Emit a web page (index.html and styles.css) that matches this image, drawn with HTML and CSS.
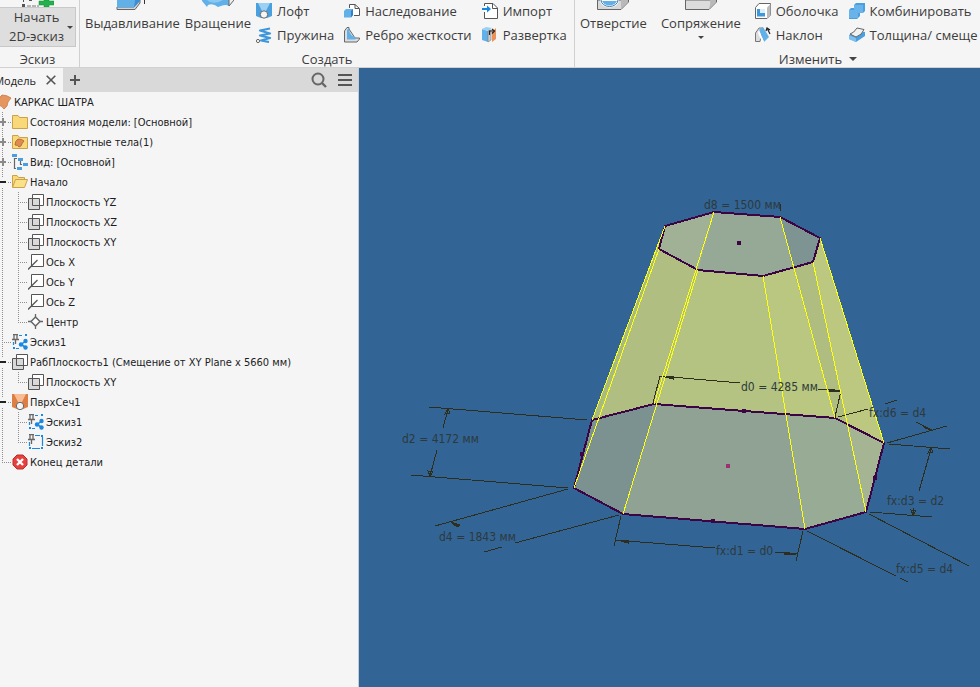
FILE: index.html
```html
<!DOCTYPE html>
<html lang="ru">
<head>
<meta charset="utf-8">
<title>КАРКАС ШАТРА</title>
<link rel="stylesheet" href="styles.css">
</head>
<body>
<svg class="defs" aria-hidden="true">
  <symbol id="g-v" viewBox="0 0 16 20"><path class="dots" d="M6.5 0V20"/></symbol>
  <symbol id="g-t" viewBox="0 0 16 20"><path class="dots" d="M6.5 0V20M8 10.500H16"/></symbol>
  <symbol id="g-l" viewBox="0 0 16 20"><path class="dots" d="M6.5 0V10M6 10.500H16"/></symbol>
  <symbol id="g-plus" viewBox="0 0 16 20"><path class="dots" d="M6.500 0V5M6.500 16V20M12 10.500H16"/><path d="M2 10H10M7 6V14" stroke="#8a8a8a" stroke-width="2"/></symbol>
  <symbol id="g-minus" viewBox="0 0 16 20"><path class="dots" d="M6.500 0V5M6.500 16V20M12 10.500H16"/><path d="M2 10H10" stroke="#222" stroke-width="2"/></symbol>
  <symbol id="i-plane" viewBox="0 0 16 16"><path d="M4.500 .5H15.500V11.500H4.500Z" fill="#fff" stroke="#555"/><path d="M.5 4.500H11.500V15.500H.5Z" fill="#d5d5d5" fill-opacity=".9" stroke="#555"/><path d="M11.500 11.500H4.500V4.500" fill="none" stroke="#555"/></symbol>
  <symbol id="i-axis" viewBox="0 0 16 16"><path d="M3.500 .5H15.500V12.500H3.500Z" fill="#fff" stroke="#555"/><path d="M0 15.500L9.500 6" stroke="#555" stroke-width="1.300"/></symbol>
  <symbol id="i-center" viewBox="0 0 16 16"><path d="M7.500 3L12 7.500L7.500 12L3 7.500Z" fill="#fff" stroke="#666" stroke-width="1.500"/><path d="M7.500 0V3M7.500 12V15M0 7.500H3M12 7.500H15" stroke="#666" stroke-width="1.300"/></symbol>
  <symbol id="i-sketch" viewBox="0 0 16 16"><path d="M7 1.500H12M14.500 3V12M4 14.500H12M1.500 8V12" stroke="#1a88e0" stroke-width="1.200" fill="none"/><path d="M13 1h2v2h-2zM1 13h2v2H1zM13 13h2v2h-2z" fill="#1a88e0"/><path d="M1 .5H6M2 1V5M5 1V5M0 5.500H7M3.500 6V10" stroke="#666" stroke-width="1.300" fill="none"/></symbol>
  <symbol id="i-shared" viewBox="0 0 16 16"><path d="M7 1.500H11M1.500 8V11M4 14.500H8" stroke="#1a88e0" stroke-width="1.200" fill="none" stroke-dasharray="3 1"/><path d="M13 0h2v2h-2zM1 13h2v2H1z" fill="#1a88e0"/><path d="M14 7L9 10.500L14 13.500" stroke="#1a88e0" stroke-width="1.500" fill="none"/><circle cx="13.500" cy="7" r="2.200" fill="#1a88e0"/><circle cx="9" cy="10.500" r="2.200" fill="#1a88e0"/><circle cx="13.500" cy="13.500" r="2.200" fill="#1a88e0"/><path d="M1 .5H6M2 1V5M5 1V5M0 5.500H7M3.500 6V10" stroke="#666" stroke-width="1.300" fill="none"/></symbol>
  <symbol id="i-surface" viewBox="0 0 16 16"><path d="M6 1Q11 1 15 4Q11 8 11 12L8 15Q6 11 1 11Q1 5 6 1Z" fill="#e59560" stroke="#c9763c" stroke-width=".8"/></symbol>
  <symbol id="i-folder" viewBox="0 0 16 16"><path d="M.5 1.500H6L7.500 3.500H15.500V14.500H.5Z" fill="#f8d878" stroke="#c9a24a"/></symbol>
</svg>

<div class="app">
  <header class="ribbon">
    <section class="group group-sketch">
      <div class="tools">
        <button class="big start">
          <svg width="32" height="7" viewBox="0 0 32 7"><path d="M1.500 0V3" stroke="#555" stroke-dasharray="2 1"/><path d="M0 4h3v3H0zM7 0h3v1H7z" fill="#555"/><path d="M5 6H17" stroke="#777" stroke-dasharray="4 1"/><path d="M22 0h5v1h5v4h-5v2h-5V5h-5V1h5z" fill="#22b14c" stroke="#16903a" stroke-width=".5"/></svg>
          <span class="start-label"><span>Начать<br>2D-эскиз</span><i class="caret"></i></span>
        </button>
      </div>
      <h2>Эскиз</h2>
    </section>

    <section class="group group-create">
      <div class="tools">
        <button class="big">
          <svg width="32" height="10" viewBox="0 0 32 10"><path d="M20 0H24V3L19 9.500H1V7H18Z" fill="#d4d4d4" stroke="#666"/><path d="M1 0H24V1L18 7.500H1Z" fill="#62b0e8"/><path d="M19 0H24V1L18 7.500Z" fill="#3d8fd0"/><path d="M28.500 0V4" stroke="#333"/></svg>
          <span>Выдавливание</span>
        </button>
        <button class="big">
          <svg width="32" height="10" viewBox="0 0 32 10"><path d="M0 0H27V6Q24 4 19 6L16 7Q11 3 6 5L5 7L0 1Z" fill="#62b0e8"/><path d="M5 0H21Q15 4 8 2Z" fill="#8cc8f2"/><path d="M27 0V6L32 0" fill="#eee" stroke="#666"/></svg>
          <span>Вращение</span>
        </button>
        <div class="stack">
          <button class="small"><svg viewBox="0 0 16 16"><path d="M0 0H16V13L11 15H5L0 13Z" fill="#4a9fdf"/><path d="M2 0H14L10 8H6Z" fill="#9bd0f5"/><circle cx="8" cy="11.500" r="3.700" fill="#f5f5f5" stroke="#666"/></svg><span>Лофт</span></button>
          <button class="small"><svg viewBox="0 0 16 16"><path d="M14 1.500L4 3.500L14 6.500L4 8.500L14 11L5 13.500L13 15" fill="none" stroke="#3d97da" stroke-width="2.200" stroke-linejoin="round"/><circle cx="2" cy="14" r="1.600" fill="#fff" stroke="#666"/></svg><span>Пружина</span></button>
        </div>
        <div class="stack">
          <button class="small"><svg viewBox="0 0 16 16"><path d="M5.500 5V1.500H11L15.500 5.500V12.500H10" fill="#fff" stroke="#555"/><path d="M11 1.500V5.500H15" fill="none" stroke="#555"/><path d="M0 8L2 6H9V12L7 14.500H0Z" fill="#62b0e8"/><path d="M7 8L9 6V12L7 14.500Z" fill="#2f80c4"/></svg><span>Наследование</span></button>
          <button class="small"><svg viewBox="0 0 16 16"><path d="M.5 4L3 .5H5V2L11 11H15.500V12L13 15H.5Z" fill="#ddd" stroke="#666"/><path d="M3 3L5 1Q5 9 13 11L11 12.500H3Z" fill="#62b0e8"/></svg><span>Ребро жесткости</span></button>
        </div>
        <div class="stack">
          <button class="small"><svg viewBox="0 0 16 16"><path d="M2.500 3V.5H11L15.500 5V15.500H2.500V9" fill="#fff" stroke="#555"/><path d="M10.500 .5V5.500H15" fill="none" stroke="#555"/><path d="M0 5H5V2.500L9 6L5 9.500V7H0Z" fill="#1688e2"/></svg><span>Импорт</span></button>
          <button class="small"><svg viewBox="0 0 16 16"><path d="M0 2L6 4V15L0 13Z" fill="#62b0e8"/><path d="M0 2L4 0L10 1L6 4Z" fill="#9bd0f5"/><path d="M6 4L9 3V13L6 15Z" fill="#ccc" stroke="#777" stroke-width=".6"/><path d="M10 5L14 1V12L10 15Z" fill="#e8935e"/><path d="M7.500 8V4H11M10 2L12.500 4L10 6.500" fill="none" stroke="#222" stroke-width="1.200"/></svg><span>Развертка</span></button>
        </div>
      </div>
      <h2>Создать</h2>
    </section>

    <section class="group group-modify">
      <div class="tools">
        <button class="big">
          <svg width="32" height="10" viewBox="0 0 32 10"><path d="M.5 0V9.500H24L31.500 2V0Z" fill="#d8d8d8" stroke="#666"/><path d="M24 9V0H31V2Z" fill="#b9b9b9"/><path d="M4 0A8.500 6.500 0 0 0 21 0Z" fill="#62b0e8" stroke="#fff" stroke-width="2"/><path d="M4 0A8.500 6.500 0 0 0 21 0" fill="none" stroke="#3a7cae"/></svg>
          <span>Отверстие</span>
        </button>
        <button class="big">
          <svg width="32" height="10" viewBox="0 0 32 10"><path d="M.5 0V9.500H24L31.500 2V0Z" fill="#dcdcdc" stroke="#666"/><path d="M24 9Q26 4 25 0H31V2Z" fill="#b9b9b9"/></svg>
          <span>Сопряжение</span><i class="caret"></i>
        </button>
        <div class="stack">
          <button class="small"><svg viewBox="0 0 16 16"><path d="M.5 4.500L4 .5H15.500V12L12 15.500H.5Z" fill="#fff" stroke="#666"/><path d="M12 4.500L15.500 1V12L12 15.500Z" fill="#bbb"/><path d="M2 6H10V13H2Z" fill="#d9edfb"/><path d="M2 6H5V10H10V13.500H2Z" fill="#3d97da"/></svg><span>Оболочка</span></button>
          <button class="small"><svg viewBox="0 0 16 16"><path d="M.5 14.500V6L4 1H8L5 14.500Z" fill="#ddd" stroke="#777"/><path d="M4 3L8 0L14 10L9 15Z" fill="#62b0e8"/><path d="M4 3L9 15L7 15L3 6Z" fill="#fff"/><path d="M15 7L12.500 2M11 4L12 1L15 3" stroke="#222" fill="none" stroke-width="1.200"/></svg><span>Наклон</span></button>
        </div>
        <div class="stack">
          <button class="small"><svg viewBox="0 0 16 16"><path d="M5 2L7 0H16V8L14 10H11V13L8 16H0V7L2 5H5Z" fill="#4a9fdf"/><path d="M5 2H14V10H9V15H0V7H5Z" fill="#68b4ea"/></svg><span>Комбинировать</span></button>
          <button class="small"><svg viewBox="0 0 16 16"><path d="M0 8L8 4L16 5V9L7 15L0 12Z" fill="#4a9fdf"/><path d="M0 8L7 11V15L0 12Z" fill="#7cc0f0"/><path d="M1 7Q5 6 8 1L15 2.500Q13 8 7 10Z" fill="#f2f2f2" stroke="#666"/></svg><span>Толщина/ смеще</span></button>
        </div>
      </div>
      <h2>Изменить <i class="caret wide"></i></h2>
    </section>
  </header>

  <main class="work">
    <aside class="browser">
      <div class="tabs">
        <div class="tab"><span>Модель</span><button class="icon" aria-label="Закрыть"><svg width="10" height="10" viewBox="0 0 10 10"><path d="M.7 .7L9.300 9.300M9.300 .7L.7 9.300" stroke="#555" stroke-width="1.600"/></svg></button></div>
        <button class="icon add" aria-label="Добавить"><svg width="10" height="10" viewBox="0 0 10 10"><path d="M5 0V10M0 5H10" stroke="#555" stroke-width="2"/></svg></button>
        <button class="icon" aria-label="Поиск"><svg width="16" height="16" viewBox="0 0 16 16"><circle cx="7" cy="7" r="5.500" fill="none" stroke="#666" stroke-width="2"/><path d="M11 11L15 15" stroke="#666" stroke-width="2.400"/></svg></button>
        <button class="icon" aria-label="Меню"><svg width="14" height="12" viewBox="0 0 14 12"><path d="M0 1H14M0 6H14M0 11H14" stroke="#555" stroke-width="2"/></svg></button>
      </div>
      <ul class="tree">
        <li><svg class="ico"><use href="#i-surface"/></svg><span>КАРКАС ШАТРА</span></li>
        <li><button class="gut" aria-label="Развернуть"><svg><use href="#g-plus"/></svg></button><svg class="ico"><use href="#i-folder"/></svg><span>Состояния модели: [Основной]</span></li>
        <li><button class="gut" aria-label="Развернуть"><svg><use href="#g-plus"/></svg></button><svg class="ico" viewBox="0 0 16 16"><use href="#i-folder"/><path d="M6 5Q10 5 12 7Q10 9 9 12L7 13Q6 11 3 11Q3 7 6 5Z" fill="#e08a50" stroke="#a8622e" stroke-width=".8"/></svg><span>Поверхностные тела(1)</span></li>
        <li><button class="gut" aria-label="Развернуть"><svg><use href="#g-plus"/></svg></button><svg class="ico" viewBox="0 0 16 16"><path d="M0 0h5v3H0zM6 4h5v3H6zM11 9h5v3h-5zM5 13h5v3H5z" fill="#4a9fdf"/><path d="M5 4.500H2.500V14.500H4M8.500 7V10.500H10" fill="none" stroke="#666" stroke-width="1.200"/></svg><span>Вид: [Основной]</span></li>
        <li><button class="gut" aria-label="Свернуть"><svg><use href="#g-minus"/></svg></button><svg class="ico" viewBox="0 0 16 16"><path d="M.5 13V1.500H5L6.500 3.500H12.500V6" fill="#f8d878" stroke="#c9a24a"/><path d="M3.500 5.500H15.500L12.500 13.500H.5Z" fill="#fbe08a" stroke="#c9a24a"/></svg><span>Начало</span></li>
        <li><svg class="gut"><use href="#g-v"/></svg><svg class="gut"><use href="#g-t"/></svg><svg class="ico"><use href="#i-plane"/></svg><span>Плоскость YZ</span></li>
        <li><svg class="gut"><use href="#g-v"/></svg><svg class="gut"><use href="#g-t"/></svg><svg class="ico"><use href="#i-plane"/></svg><span>Плоскость XZ</span></li>
        <li><svg class="gut"><use href="#g-v"/></svg><svg class="gut"><use href="#g-t"/></svg><svg class="ico"><use href="#i-plane"/></svg><span>Плоскость XY</span></li>
        <li><svg class="gut"><use href="#g-v"/></svg><svg class="gut"><use href="#g-t"/></svg><svg class="ico"><use href="#i-axis"/></svg><span>Ось X</span></li>
        <li><svg class="gut"><use href="#g-v"/></svg><svg class="gut"><use href="#g-t"/></svg><svg class="ico"><use href="#i-axis"/></svg><span>Ось Y</span></li>
        <li><svg class="gut"><use href="#g-v"/></svg><svg class="gut"><use href="#g-t"/></svg><svg class="ico"><use href="#i-axis"/></svg><span>Ось Z</span></li>
        <li><svg class="gut"><use href="#g-v"/></svg><svg class="gut"><use href="#g-l"/></svg><svg class="ico"><use href="#i-center"/></svg><span>Центр</span></li>
        <li><svg class="gut"><use href="#g-t"/></svg><svg class="ico"><use href="#i-shared"/></svg><span>Эскиз1</span></li>
        <li><button class="gut" aria-label="Свернуть"><svg><use href="#g-minus"/></svg></button><svg class="ico"><use href="#i-plane"/></svg><span>РабПлоскость1 (Смещение от XY Plane x 5660 мм)</span></li>
        <li><svg class="gut"><use href="#g-v"/></svg><svg class="gut"><use href="#g-l"/></svg><svg class="ico"><use href="#i-plane"/></svg><span>Плоскость XY</span></li>
        <li><button class="gut" aria-label="Свернуть"><svg><use href="#g-minus"/></svg></button><svg class="ico" viewBox="0 0 16 16"><path d="M0 0H16V13L11 15H5L0 13Z" fill="#dd7f45"/><path d="M2 0H14L10 8H6Z" fill="#f8bd95"/><circle cx="8" cy="12" r="3.700" fill="#f5f5f5" stroke="#666"/></svg><span>ПврхСеч1</span></li>
        <li><svg class="gut"><use href="#g-v"/></svg><svg class="gut"><use href="#g-t"/></svg><svg class="ico"><use href="#i-shared"/></svg><span>Эскиз1</span></li>
        <li><svg class="gut"><use href="#g-v"/></svg><svg class="gut"><use href="#g-l"/></svg><svg class="ico"><use href="#i-sketch"/></svg><span>Эскиз2</span></li>
        <li><svg class="gut"><use href="#g-l"/></svg><svg class="ico" viewBox="0 0 16 16"><path d="M5 1H11L15 5V11L11 15H5L1 11V5Z" fill="#e8403c" stroke="#b8302e"/><path d="M5 5L11 11M11 5L5 11" stroke="#fff" stroke-width="2.400"/></svg><span>Конец детали</span></li>
      </ul>
    </aside>

    <svg class="viewport" viewBox="359 68 621 619" role="img" aria-label="Модель">
      <g class="faces">
        <path fill="#b5c382" d="M665 226L714 212L780 217L820 238L884 443L835 418L654 404L592 420Z"/>
        <path fill="#b0be81" d="M659 249L698 270L655 404L592 420L600 405Z"/>
        <path fill="#a9ba80" d="M665 226L659 249L597 419L592 420Z"/>
        <path fill="#bac780" d="M763 276L793 268L835 418L786 414Z"/>
        <path fill="#b0bd80" d="M793 268L813 262L848 425L835 418Z"/>
        <path fill="#bcc87f" d="M813 262L820 238L884 443L848 425Z"/>
        <path fill="#7c9290" d="M592 420L654 404L656 404L623 514L574 488Z"/>
        <path fill="#8fa293" d="M656 404L786 414L805 529L623 514Z"/>
        <path fill="#98ab94" d="M786 414L835 418L847 425L866 512L805 529Z"/>
        <path fill="#a5b594" d="M847 425L884 443L866 512Z"/>
        <path fill="#a0b196" d="M665 226L714 212L698 270L659 249Z"/>
        <path fill="#96a996" d="M714 212L780 217L793 268L763 276L698 270Z"/>
        <path fill="#7d9493" d="M780 217L820 238L813 262L793 268Z"/>
      </g>
      <g class="dims">
        <path d="M653 403L660 376L740 383M818 389L841 391L835 417"/>
        <path d="M838 417L868 409M885 404L897 400M887 443L947 426M916 422L932 430"/>
        <path d="M889 444L950 449M931 449L919 491M870 512L932 517M914 508L913 516"/>
        <path d="M429 407L587 420M448 409L443 428M437 450L430 476M411 475L568 488"/>
        <path d="M568 489L435 526M451 522L459 526M619 515L515 543M502 547L484 552"/>
        <path d="M621 516L614 546M615 540L715 548M775 552L797 554M803 531L796 561"/>
        <path d="M807 531L896 576M900 578L908 582M869 514L969 566"/>
        <path d="M780 204V211"/>
      </g>
      <path class="arrows" d="M661 376L673 376V379ZM841 391L829 389V392ZM617 540L628 540V543ZM796 554L784 552V555ZM451 522L460 525L457 527ZM932 430L922 425L925 428Z"/>
      <path class="dims" d="M448 409L445 414L450 413ZM430 476L428 471L433 472ZM931 448L928 453L933 452ZM913 515L911 510L916 511Z"/>
      <g class="edges">
        <path d="M665 226L714 212L780 217L820 238L813 262L763 276L698 270L659 249Z"/>
        <path d="M592 420L654 404L835 418L884 443L866 512L805 529L623 514L574 488Z"/>
      </g>
      <path class="rails" d="M665 226L592 420M659 249L574 488M714 212L654 404M698 270L623 514M763 276L805 529M780 217L835 418M813 262L866 512M820 238L884 443"/>
      <path class="pts" d="M737 241h4v4h-4zM742 409h4v4h-4zM580 452h4v4h-4zM711 519h4v4h-4zM873 476h4v4h-4z"/>
      <path fill="#9c3070" d="M726 464h4v4h-4z"/>
      <g class="labels">
        <text x="704" y="209">d8 = 1500 мм</text>
        <text x="741" y="391">d0 = 4285 мм</text>
        <text x="869" y="417">fx:d6 = d4</text>
        <text x="402" y="443">d2 = 4172 мм</text>
        <text x="887" y="505">fx:d3 = d2</text>
        <text x="439" y="541">d4 = 1843 мм</text>
        <text x="716" y="555">fx:d1 = d0</text>
        <text x="896" y="573">fx:d5 = d4</text>
      </g>
    </svg>
  </main>
</div>
</body>
</html>
```
FILE: styles.css
```css
* { box-sizing: border-box; }

body {
  margin: 0;
  background: #f5f5f5;
  color: #3c3c3c;
  font-family: "Open Sans", "Noto Sans", sans-serif;
  font-size: 13px;
  overflow: hidden;
}

button {
  border: 0;
  padding: 0;
  background: none;
  color: inherit;
  font: inherit;
}

.defs { position: absolute; width: 0; height: 0; }

.app {
  display: flex;
  flex-direction: column;
  height: 100vh;
}

/* Ribbon */
.ribbon {
  display: flex;
  flex: none;
  border-bottom: 1px solid #d2d2d2;
  overflow: hidden;
  white-space: nowrap;
}

.group {
  flex: none;
  display: flex;
  flex-direction: column;
  height: 67px;
  border-right: 1px solid #d0d0d0;
}

.group h2 {
  display: flex;
  justify-content: center;
  align-items: center;
  gap: 7px;
  margin: 0;
  font-size: 13px;
  font-weight: 400;
  line-height: 16px;
}

.group-sketch { width: 80px; }
.group-create { width: 495px; }
.group-modify { width: 486px; border-right: 0; }

.tools {
  display: flex;
  height: 51px;
  gap: 5px;
  padding: 0 5px;
}

.group-sketch .tools { padding: 0 3px 0 0; }
.group-sketch h2 { padding-right: 4px; }
.group-modify .big { margin-right: 9px; }

.big {
  display: flex;
  flex-direction: column;
  align-items: center;
  gap: 3px;
  line-height: 20px;
}

.big svg { flex: none; }

.start { flex: 1; gap: 0; height: 47px; }

.start-label {
  display: flex;
  align-items: center;
  justify-content: flex-end;
  gap: 3px;
  width: 100%;
  padding-right: 2px;
  border: 1px solid #c8c8c8;
  border-left: 0;
  background: #dedede;
  line-height: 19px;
}

.caret {
  border: 3px solid transparent;
  border-top-color: #444;
  border-bottom: 0;
}

.caret.wide { border-width: 4px 4px 0; }

.stack {
  display: flex;
  flex-direction: column;
  gap: 2px;
  padding-right: 5px;
}

.small {
  display: flex;
  align-items: center;
  gap: 5px;
  height: 22px;
}

.small svg { flex: none; width: 16px; height: 16px; }

/* Browser panel */
.work {
  display: flex;
  flex: 1;
  min-height: 0;
}

.browser {
  flex: none;
  width: 359px;
  border-right: 1px solid #c4ccd4;
  color: #1c1c24;
  font-size: 11px;
}

.tabs {
  display: flex;
  align-items: center;
  gap: 11px;
  height: 24px;
  padding-right: 6px;
  background: #d9d9d9;
}

.tab {
  display: flex;
  align-items: center;
  justify-content: flex-end;
  gap: 10px;
  width: 63px;
  height: 24px;
  padding-right: 7px;
  background: #f5f5f5;
}

.icon { display: flex; }
.add { margin: 0 auto 0 -4px; }

.tree {
  margin: 0 0 0 -4px;
  padding: 0;
  font-family: "DejaVu Sans Condensed", "DejaVu Sans", sans-serif;
  list-style: none;
}

.tree li {
  display: flex;
  align-items: center;
  height: 20px;
  white-space: nowrap;
}

.ico {
  flex: none;
  width: 16px;
  height: 16px;
  margin-right: 2px;
}

.gut {
  flex: none;
  display: block;
  width: 16px;
  height: 20px;
}

.gut svg { display: block; width: 16px; height: 20px; }

.dots { stroke: #909090; stroke-dasharray: 1 1; fill: none; }

/* Model view */
.viewport {
  flex: 1;
  min-width: 0;
  height: 100%;
  background: #336496;
}

.faces, .dims, .edges, .rails, .arrows, .pts { shape-rendering: crispEdges; }
.dims { fill: none; stroke: #2e2e1c; }
.arrows { fill: #2e2e1c; stroke: #2e2e1c; }
.edges { fill: none; stroke: #3c0444; stroke-width: 2; }
.rails { fill: none; stroke: #ffff10; }
.pts { fill: #3c0444; }

.labels {
  fill: #2c3a3c;
  font-family: "DejaVu Sans Condensed", "DejaVu Sans", sans-serif;
  font-size: 12px;
}
```
